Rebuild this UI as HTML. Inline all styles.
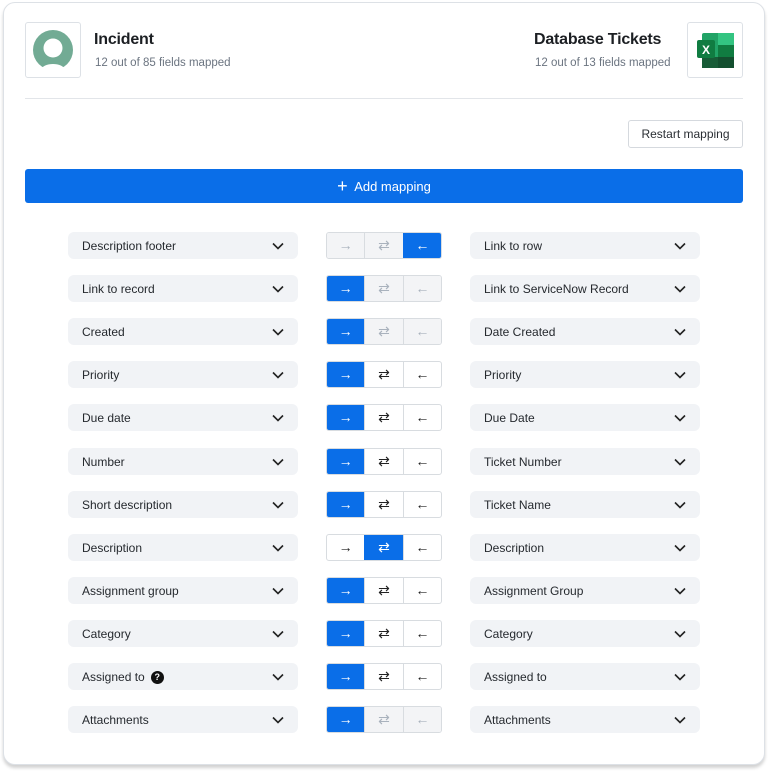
<!DOCTYPE html>
<html><head><style>
*{box-sizing:border-box;margin:0;padding:0}
body{width:768px;height:771px;background:#fff;font-family:"Liberation Sans",sans-serif;position:relative;overflow:hidden}
.card{position:absolute;left:3px;top:2px;width:762px;height:763px;border:1px solid #dde1e6;border-radius:12px;background:#fff;box-shadow:0 3px 3px rgba(0,0,0,.18)}
.logo{position:absolute;top:22px;width:56px;height:56px;border:1px solid #dde1e6;border-radius:3px;background:#fff}
.t{position:absolute;font-size:16px;font-weight:bold;color:#1c1f23;letter-spacing:-0.2px}
.s{position:absolute;font-size:11.5px;color:#6b7480}
.div{position:absolute;left:25px;top:98px;width:718px;height:1px;background:#e2e5e9}
.restart{position:absolute;left:628px;top:120px;width:115px;height:28px;border:1px solid #d5d9de;border-radius:3px;font-size:12px;color:#2a2e33;text-align:center;line-height:26px}
.add{position:absolute;left:25px;top:169px;width:718px;height:34px;background:#0a6ee8;border-radius:3px;color:#fff;font-size:13px;text-align:center;line-height:34px}
.sel{position:absolute;width:230px;height:27px;background:#f1f3f6;border-radius:6px;font-size:12px;color:#25292e;line-height:28px;padding-left:14px}
.sel svg{position:absolute;right:14px;top:10px}
.tg{position:absolute;left:326px;width:116px;height:27px;border:1px solid #d8dce0;border-radius:3px;display:flex;overflow:hidden}
.tg div{flex:1;text-align:center;line-height:24px;font-size:14px;border-left:1px solid #d8dce0;color:#222}
.tg div:first-child{border-left:none}
.tg .on{background:#0a6ee8;color:#fff;border-color:#0a6ee8}
.tg .dis{background:#f3f4f6;color:#a9b2bd}
.q{display:inline-block;width:13px;height:13px;border-radius:50%;background:#111;color:#fff;font-size:9px;font-weight:bold;text-align:center;line-height:13px;margin-left:6px;vertical-align:1px}
</style></head><body>
<div class="card"></div>
<div class="logo" style="left:25px"><svg width="54" height="54" viewBox="0 0 54 54"><circle cx="27" cy="27" r="20" fill="#72ab94"/><circle cx="27" cy="25" r="9.5" fill="#fff"/><ellipse cx="27" cy="46" rx="11" ry="5" fill="#fff"/></svg></div>
<div class="t" style="left:94px;top:31px">Incident</div>
<div class="s" style="left:95px;top:57px">12 out of 85 fields mapped</div>
<div class="t" style="left:534px;top:31px">Database Tickets</div>
<div class="s" style="left:535px;top:57px">12 out of 13 fields mapped</div>
<div class="logo" style="left:687px"><svg width="56" height="56" viewBox="0 0 56 56"><rect x="14" y="10" width="32" height="35" rx="2" fill="#21a366"/><rect x="30" y="10" width="16" height="12" fill="#33c481"/><rect x="30" y="22" width="16" height="12" fill="#107c41"/><rect x="14" y="34" width="32" height="11" fill="#185c37"/><rect x="30" y="34" width="16" height="11" fill="#134f2f"/><rect x="9" y="17" width="18" height="18" rx="2" fill="#107c41"/><text x="18" y="31" font-size="12" font-weight="bold" fill="#fff" text-anchor="middle" font-family="Liberation Sans">X</text></svg></div>
<div class="div"></div>
<div class="restart">Restart mapping</div>
<div class="add"><span style="font-size:18px;vertical-align:-1px">+</span>&nbsp; Add mapping</div>
<div id="rows"></div>
<script>
const L=["Description footer","Link to record","Created","Priority","Due date","Number","Short description","Description","Assignment group","Category","Assigned to","Attachments"];
const R=["Link to row","Link to ServiceNow Record","Date Created","Priority","Due Date","Ticket Number","Ticket Name","Description","Assignment Group","Category","Assigned to","Attachments"];
const st=[["dis","dis","on"],["on","dis","dis"],["on","dis","dis"],["on","",""],["on","",""],["on","",""],["on","",""],["","on",""],["on","",""],["on","",""],["on","",""],["on","dis","dis"]];
const chev='<svg width="12" height="8" viewBox="0 0 12 8"><path d="M1 1.5 L6 6.5 L11 1.5" fill="none" stroke="#222" stroke-width="1.6"/></svg>';
let h="";
for(let i=0;i<12;i++){const y=232+i*43.1;
h+=`<div class="sel" style="left:68px;top:${y}px">${L[i]}${i==10?'<span class="q">?</span>':''}${chev}</div>`;
h+=`<div class="tg" style="top:${y}px"><div class="${st[i][0]}">&rarr;</div><div class="${st[i][1]}">&#8644;</div><div class="${st[i][2]}">&larr;</div></div>`;
h+=`<div class="sel" style="left:470px;top:${y}px">${R[i]}${chev}</div>`;}
document.getElementById("rows").innerHTML=h;
</script>
</body></html>
